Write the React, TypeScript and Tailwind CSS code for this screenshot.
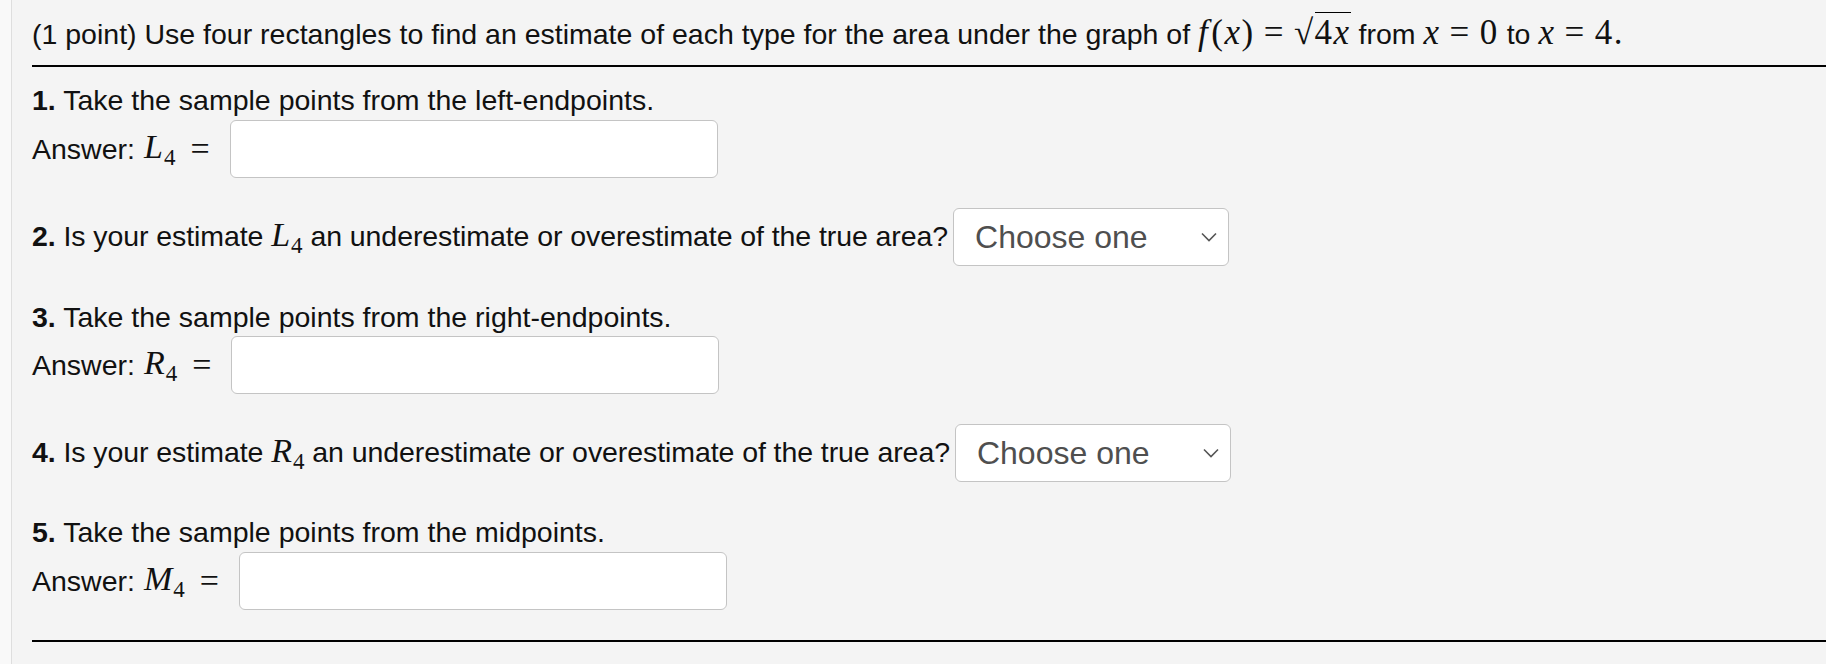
import React from 'react';

const serif = "font-['Liberation_Serif','DejaVu_Serif',serif]";

function V({ ch, sub }: { ch: string; sub?: string }) {
    return (
        <span className={`${serif} whitespace-nowrap`}>
            <span className="italic text-[34px]">{ch}</span>
            {sub && <span className="text-[23px] relative top-[7px] ml-[1px]">{sub}</span>}
        </span>
    );
}

function Eq() {
    return <span className={`${serif} text-[34px] mx-[12px]`}>=</span>;
}

function AnswerRow({ v }: { v: string }) {
    return (
        <div className="flex items-center h-[58px]">
            <span>Answer:</span>
            <span className="ml-[9px]">
                <V ch={v} sub="4" />
            </span>
            <span className="ml-[3px] mr-[8px]">
                <Eq />
            </span>
            <div className="w-[488px] h-[58px] bg-white border border-[#c4c4c4] rounded-[6px]" />
        </div>
    );
}

function SelectBox() {
    return (
        <div className="w-[276px] h-[58px] bg-white border border-[#c4c4c4] rounded-[6px] flex items-center pl-[21px] pr-[10px]">
            <span className="text-[32px] text-[#4f4f4f] flex-1">Choose one</span>
            <svg width="16" height="10" viewBox="0 0 16 10" className="mr-[1px]">
                <path d="M1 1.5 L8 8.5 L15 1.5" fill="none" stroke="#555" strokeWidth="1.6" />
            </svg>
        </div>
    );
}

function QuestionRow({ n, v }: { n: string; v: string }) {
    return (
        <div className="flex items-center h-[58px]">
            <span className="tracking-[-0.08px]">
                <b>{n}.</b> Is your estimate{' '}
                <V ch={v} sub="4" />
                <span className="ml-[8px]">an underestimate or overestimate of the true area?</span>
            </span>
            <div className="ml-[5px]">
                <SelectBox />
            </div>
        </div>
    );
}

export default function App() {
    return (
        <div className="flex min-h-screen bg-[#f4f4f4] font-['Liberation_Sans',Arial,sans-serif] text-[28.5px] text-[#111] leading-[34px]">
            <div className="w-[12px] shrink-0 bg-[#f9f9f9] border-r border-[#dedede]" />
            <div className="flex-1 pl-[20px] pt-[16px]">
                <div className="whitespace-nowrap">
                    (1 point) Use four rectangles to find an estimate of each type for the area under the graph of{' '}
                    <span className={`${serif} text-[35px] tracking-[1.5px]`}>
                        <span className="italic">f</span>
                        <span className="ml-[2px]">(</span>
                        <span className="italic">x</span>)
                        <span className="mx-[9px]">=</span>
                        <span>√</span>
                        <span className="border-t-[1.5px] border-black">
                            4<span className="italic">x</span>
                        </span>
                    </span>{' '}
                    from{' '}
                    <span className={`${serif} text-[35px] tracking-[1.5px]`}>
                        <span className="italic">x</span>
                        <span className="mx-[9px]">=</span>0
                    </span>{' '}
                    to{' '}
                    <span className={`${serif} text-[35px] tracking-[1.5px]`}>
                        <span className="italic">x</span>
                        <span className="mx-[9px]">=</span>4.
                    </span>
                </div>
                <div className="mt-[14px] h-[2px] bg-black" />

                <div className="mt-[16px]">
                    <b>1.</b> Take the sample points from the left-endpoints.
                </div>
                <div className="mt-[3px]">
                    <AnswerRow v="L" />
                </div>

                <div className="mt-[30px]">
                    <QuestionRow n="2" v="L" />
                </div>

                <div className="mt-[34px]">
                    <b>3.</b> Take the sample points from the right-endpoints.
                </div>
                <div className="mt-[2px]">
                    <AnswerRow v="R" />
                </div>

                <div className="mt-[30px]">
                    <QuestionRow n="4" v="R" />
                </div>

                <div className="mt-[33px]">
                    <b>5.</b> Take the sample points from the midpoints.
                </div>
                <div className="mt-[3px]">
                    <AnswerRow v="M" />
                </div>

                <div className="mt-[30px] h-[2px] bg-black" />
            </div>
        </div>
    );
}
